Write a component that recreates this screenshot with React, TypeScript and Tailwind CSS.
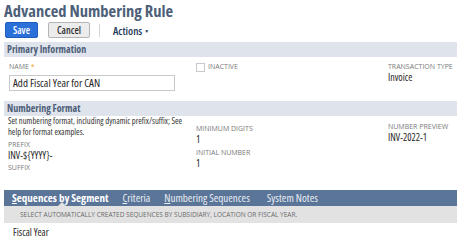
import React from 'react';

const font = { fontFamily: '"Open Sans", "Liberation Sans", sans-serif' };

function Label({ children }: { children: React.ReactNode }) {
  return (
    <div className="font-stretch-normal text-[7px] leading-[10px] uppercase text-[#7a7a7a]">{children}</div>
  );
}

function Value({ children }: { children: React.ReactNode }) {
  return <div className="text-[10px] leading-[11px] text-[#262626]">{children}</div>;
}

export default function App() {
  return (
    <div className="w-[474px] h-[245px] bg-white overflow-hidden font-stretch-[75%]" style={font}>
      {/* Title */}
      <h1 className="pl-[4px] text-[16.5px] leading-[22px] font-bold text-[#4d5f79]">
        Advanced Numbering Rule
      </h1>

      {/* Buttons */}
      <div className="flex items-center pl-[5px] h-[16px]">
        <button className="w-[33px] h-[16px] rounded-[2px] bg-[#2b6fd9] border border-[#1f5cbf] text-white text-[10px] font-semibold">
          Save
        </button>
        <button className="ml-[10px] w-[42px] h-[16px] rounded-[2px] bg-[#ececec] border border-[#b5b5b5] text-[#333] text-[10px] font-semibold">
          Cancel
        </button>
        <div className="ml-[9px] w-px h-[13px] bg-[#d5d5d5]" />
        <div className="ml-[13px] mt-[3px] flex items-center text-[11px] font-semibold text-[#24385b]">
          Actions
          <span className="ml-[2px] text-[5px]">▼</span>
        </div>
      </div>

      {/* Primary Information */}
      <div className="ml-[4px] w-[453px] mt-[4px] h-[15px] bg-[#dfe3eb] flex items-center pl-[3px] text-[10px] font-bold text-[#4d5f79]">
        Primary Information
      </div>
      <div className="flex ml-[9px] mt-[5px] h-[39px]">
        <div className="w-[187px]">
          <div className="font-stretch-normal text-[7px] leading-[10px] uppercase text-[#7a7a7a]">
            Name <span className="text-[#f0a020]">*</span>
          </div>
          <div className="mt-[3px] w-[166px] h-[16px] border border-[#c8c8c8] pl-[3px] flex items-center text-[11px] text-[#262626]">
            Add Fiscal Year for CAN
          </div>
        </div>
        <div className="w-[192px] flex items-start mt-[1px]">
          <div className="w-[9px] h-[9px] border border-[#c8c8c8] bg-white" />
          <div className="ml-[3px] -mt-[1px] font-stretch-normal text-[7px] leading-[10px] uppercase text-[#7a7a7a]">
            Inactive
          </div>
        </div>
        <div>
          <Label>Transaction Type</Label>
          <Value>Invoice</Value>
        </div>
      </div>

      {/* Numbering Format */}
      <div className="ml-[4px] w-[453px] h-[15px] bg-[#dfe3eb] flex items-center pl-[3px] text-[10px] font-bold text-[#4d5f79]">
        Numbering Format
      </div>
      <div className="flex ml-[8px] h-[74px]">
        <div className="w-[188px]">
          <div className="text-[8.6px] leading-[11px] text-[#333] whitespace-nowrap">
            Set numbering format, including dynamic prefix/suffix; See
            <br />
            help for format examples.
          </div>
          <div className="mt-[2px]">
            <Label>Prefix</Label>
            <Value>INV-${'{'}YYYY{'}'}-</Value>
          </div>
          <div className="mt-[2px]">
            <Label>Suffix</Label>
          </div>
        </div>
        <div className="w-[192px] mt-[8px]">
          <Label>Minimum Digits</Label>
          <Value>1</Value>
          <div className="mt-[3px]">
            <Label>Initial Number</Label>
            <Value>1</Value>
          </div>
        </div>
        <div className="mt-[6px]">
          <Label>Number Preview</Label>
          <Value>INV-2022-1</Value>
        </div>
      </div>

      {/* Tabs */}
      <div className="relative ml-[4px] w-[453px] h-[16px] bg-[#5a7598] flex items-center pl-[8px] text-[11px] text-white">
        <span className="font-bold">
          <u>S</u>equences by Segment
        </span>
        <span className="ml-[14px] text-[#e8edf4]">
          <u>C</u>riteria
        </span>
        <span className="ml-[14px] text-[#e8edf4]">
          <u>N</u>umbering Sequences
        </span>
        <span className="ml-[17px] text-[#e8edf4]">System Notes</span>
        <div className="absolute left-[54px] bottom-0 w-0 h-0 border-l-[4px] border-r-[4px] border-b-[4px] border-l-transparent border-r-transparent border-b-[#e2e2e2]" />
      </div>
      <div className="ml-[4px] w-[453px] h-[17px] bg-[#e2e2e2] flex items-center pl-[16px] font-stretch-normal text-[6.5px] uppercase text-[#6a6a6a]">
        Select automatically created sequences by subsidiary, location or fiscal year.
      </div>
      <div className="ml-[13px] mt-[2px] text-[10px] text-[#262626]">Fiscal Year</div>
    </div>
  );
}
